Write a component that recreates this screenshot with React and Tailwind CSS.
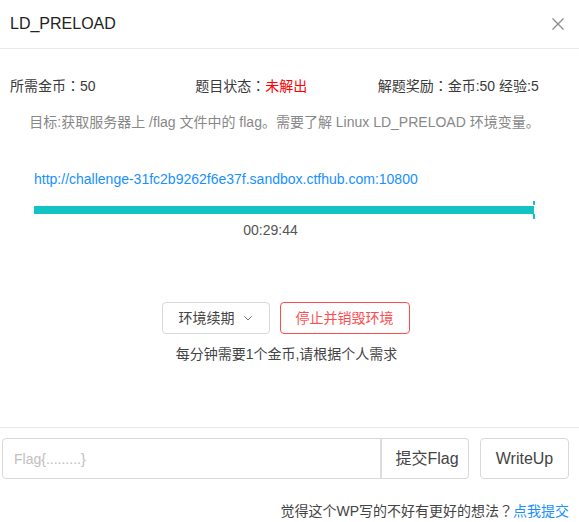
import React from "react";

const font = { fontFamily: '"Liberation Sans", "Noto Sans CJK SC", sans-serif' };
const tc = { fontFamily: '"Noto Sans CJK TC", sans-serif' };

export default function App() {
  return (
    <div className="w-[579px] h-[522px] bg-white text-[14px] text-[#333]" style={font}>
      <div className="h-[49px] border-b border-[#e8e8e8] flex items-center justify-between pl-[10px] pr-[14px]">
        <div className="text-[16px] text-[#222] leading-[22px]">LD_PRELOAD</div>
        <svg width="14" height="14" viewBox="0 0 14 14" className="text-[#8c8c8c]">
          <path d="M1.5 1.5 L12.5 12.5 M12.5 1.5 L1.5 12.5" stroke="currentColor" strokeWidth="1.3" fill="none" />
        </svg>
      </div>
      <div className="pl-[10px] pr-[16px]">
        <div className="grid grid-cols-3 pt-[26px] leading-[20px] text-[#3a3a3a]">
          <div>所需金币<span style={tc}>：</span>50</div>
          <div className="pl-[1px]">题目状态<span style={tc}>：</span><span className="text-[#ff0000]">未解出</span></div>
          <div className="-ml-[1px]">解题奖励<span style={tc}>：</span>金币:50 经验:5</div>
        </div>
        <div className="text-center text-[#888] leading-[20px] mt-[16px] pr-[4px]">
          目标:获取服务器上 /flag 文件中的 flag。需要了解 Linux LD_PRELOAD 环境变量。
        </div>
        <div className="pl-[24px] mt-[37px]">
          <div className="text-[#1890ff] leading-[20px]">http://challenge-31fc2b9262f6e37f.sandbox.ctfhub.com:10800</div>
          <div className="relative w-[503px] h-[8px] mt-[17px] bg-[#f5f5f5]">
            <div className="h-[8px] w-[500px] bg-[#13c2c2]" />
            <div className="absolute left-[499px] top-[-5px] w-[2px] h-[4px] bg-[#13c2c2]" />
            <div className="absolute left-[499px] top-[8px] w-[2px] h-[5px] bg-[#13c2c2]" />
          </div>
        </div>
        <div className="text-center leading-[20px] mt-[6px] pr-[32px] text-[#555]">00:29:44</div>
        <div className="flex justify-center gap-[10px] mt-[62px] pr-[2px]">
          <button className="h-[32px] w-[108px] border border-[#d9d9d9] rounded-[4px] flex items-center justify-center gap-[8px] text-[#444]">
            <span>环境续期</span>
            <svg width="10" height="10" viewBox="0 0 10 10" className="text-[#777]">
              <path d="M1.5 3.5 L5 7 L8.5 3.5" stroke="currentColor" strokeWidth="1" fill="none" />
            </svg>
          </button>
          <button className="h-[32px] w-[130px] border border-[#ff4d4f] rounded-[4px] text-[#ff4d4f]">停止并销毁环境</button>
        </div>
        <div className="text-center leading-[20px] mt-[10px] text-[#444]">每分钟需要1个金币,请根据个人需求</div>
      </div>
      <div className="border-t border-[#e8e8e8] mt-[63px] pt-[10px] pl-[2px] pr-[10px]">
        <div className="flex h-[41px] gap-[11px]">
          <div className="flex flex-1">
            <input
              className="flex-1 h-[41px] border border-[#d9d9d9] rounded-l-[4px] pl-[11px] pr-[12px] text-[14px] outline-none placeholder:text-[#c0c0c0]"
              placeholder="Flag{.........}"
              style={font}
            />
            <button className="h-[41px] w-[89px] border border-l-2 border-[#d9d9d9] border-l-[#ddd] rounded-r-[4px] text-[16px] text-[#444] -ml-[1px] pl-[4px]">提交Flag</button>
          </div>
          <button className="h-[41px] w-[89px] border border-[#d9d9d9] rounded-[4px] text-[16px] text-[#444]">WriteUp</button>
        </div>
        <div className="text-right mt-[21px] leading-[20px] text-[#444]">
          觉得这个WP写的不好有更好的想法<span style={tc}>？</span><span className="text-[#1890ff]">点我提交</span>
        </div>
      </div>
    </div>
  );
}
